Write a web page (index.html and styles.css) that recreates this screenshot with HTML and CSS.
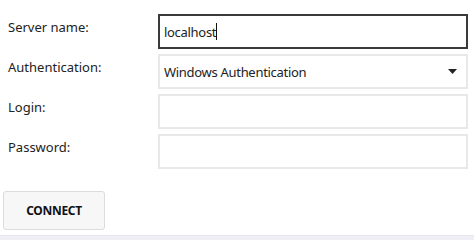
FILE: index.html
```html
<!DOCTYPE html>
<html lang="en">
<head>
  <meta charset="UTF-8">
  <title>Connect to Server</title>
  <link rel="stylesheet" href="styles.css">
</head>
<body>
  <div class="dialog">
    <div class="form">
      <label class="label">Server name:</label>
      <div class="field active">localhost<span class="caret"></span></div>

      <label class="label">Authentication:</label>
      <div class="field select">
        <span>Windows Authentication</span>
        <svg class="arrow" width="9" height="5" viewBox="0 0 9 5"><path d="M0 0h9L4.5 5z" fill="#222"/></svg>
      </div>

      <label class="label">Login:</label>
      <div class="field"></div>

      <label class="label">Password:</label>
      <div class="field"></div>
    </div>

    <button class="button">CONNECT</button>
  </div>
  <div class="footer"></div>
</body>
</html>
```

FILE: styles.css
```css
* {
  margin: 0;
  padding: 0;
  box-sizing: border-box;
}

body {
  width: 474px;
  height: 240px;
  overflow: hidden;
  background: #fff;
  font-family: "Noto Sans", "Open Sans", sans-serif;
  font-size: 13px;
  color: #222;
}

.dialog {
  height: 235px;
  padding: 14px 6px 0 3px;
}

.form {
  display: grid;
  grid-template-columns: 155px 310px;
  row-gap: 5px;
  align-items: center;
}

.label {
  padding-left: 5px;
  padding-bottom: 9px;
}

.field {
  height: 35px;
  border: 2px solid #e8e8e8;
  background: #fff;
  display: flex;
  align-items: center;
  padding: 0 4px;
  letter-spacing: -0.3px;
}

.field.active {
  border: 2px solid #3a3a3a;
}

.caret {
  display: inline-block;
  width: 1px;
  height: 17px;
  background: #111;
}

.field.select {
  justify-content: space-between;
  padding-right: 9px;
}

.arrow {
  display: block;
}

.button {
  margin-top: 22px;
  width: 102px;
  height: 39px;
  border: 1px solid #dcdcdc;
  border-radius: 3px;
  background: #f7f7f7;
  font-family: "Noto Sans", "Open Sans", sans-serif;
  font-size: 12px;
  font-weight: 700;
  color: #111;
  letter-spacing: -0.3px;
}

.footer {
  height: 5px;
  background: #eeeef4;
  border-top: 1px solid #e6e6ee;
}
```
